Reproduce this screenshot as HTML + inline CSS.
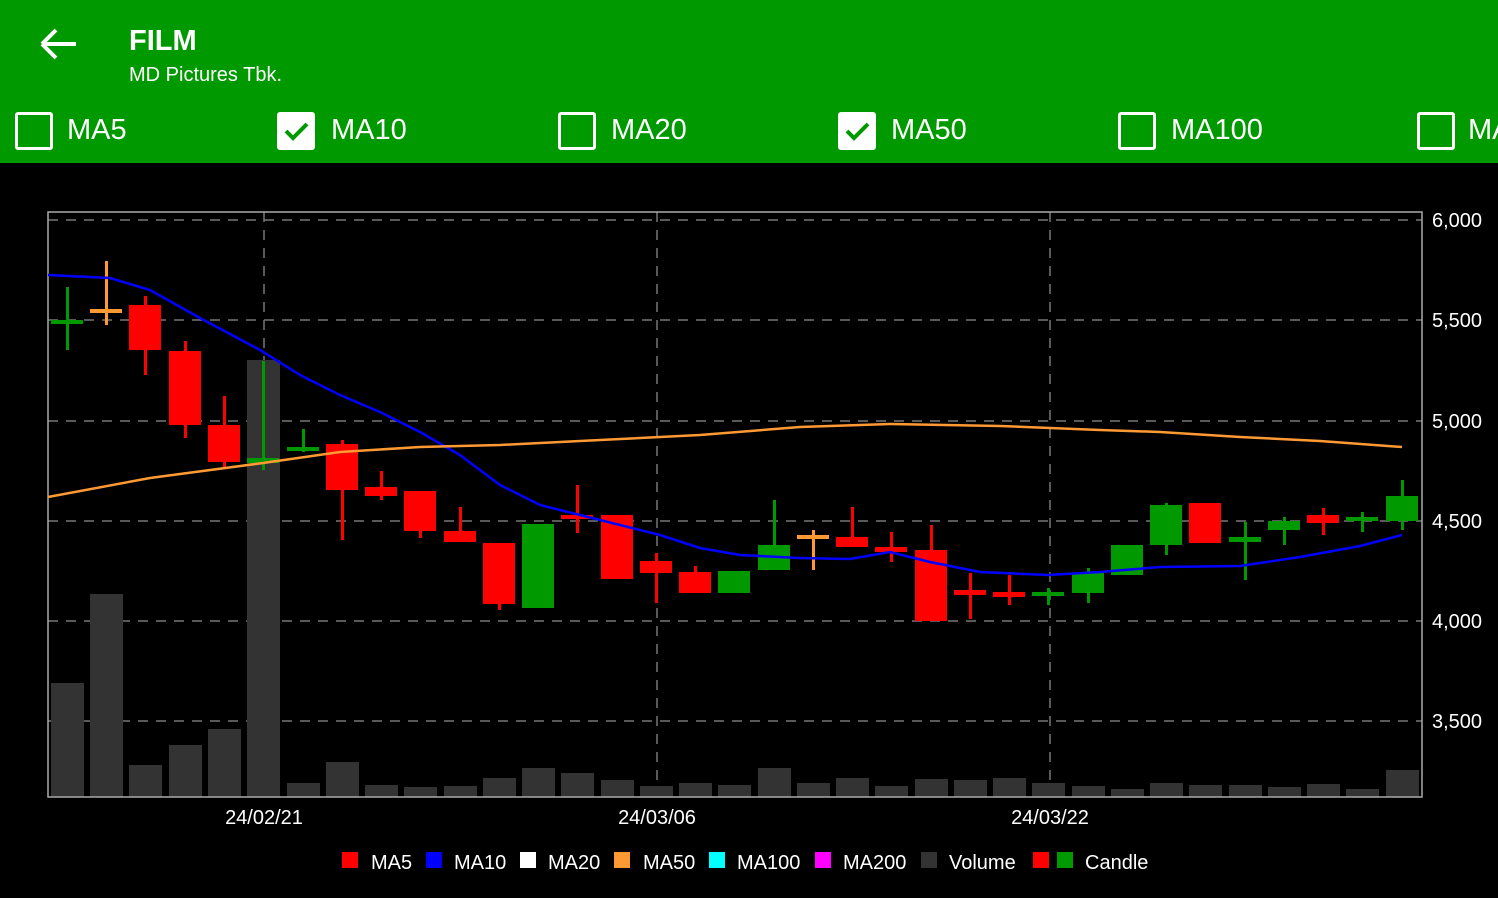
<!DOCTYPE html><html><head><style>
body{margin:0;width:1498px;height:898px;background:#000;overflow:hidden;font-family:"Liberation Sans",Arial,sans-serif;}
.hdr{position:absolute;left:0;top:0;width:1498px;height:163px;background:#009900;color:#fff;}
.cb{position:absolute;top:112px;width:32px;height:32px;border:3px solid #fff;border-radius:3px;box-sizing:content-box;}
.cb.on{background:#fff;}
.lb{position:absolute;top:112px;font-size:29px;line-height:36px;}
</style></head><body>
<div class="hdr">
<svg style="position:absolute;left:38px;top:26px" width="40" height="36" viewBox="0 0 40 36"><path d="M4 18H38M4 18L18 4M4 18L18 32" stroke="#fff" stroke-width="4" fill="none"/></svg>
<div style="position:absolute;left:129px;top:25px;font-size:29px;font-weight:bold">FILM</div>
<div style="position:absolute;left:129px;top:64px;font-size:20px">MD Pictures Tbk.</div>
<div class="cb" style="left:15px"></div><div class="lb" style="left:67px">MA5</div>
<div class="cb on" style="left:277px"><svg width="32" height="32"><path d="M6 16L13 23L27 9" stroke="#009900" stroke-width="4" fill="none"/></svg></div><div class="lb" style="left:331px">MA10</div>
<div class="cb" style="left:558px"></div><div class="lb" style="left:611px">MA20</div>
<div class="cb on" style="left:838px"><svg width="32" height="32"><path d="M6 16L13 23L27 9" stroke="#009900" stroke-width="4" fill="none"/></svg></div><div class="lb" style="left:891px">MA50</div>
<div class="cb" style="left:1118px"></div><div class="lb" style="left:1171px">MA100</div>
<div class="cb" style="left:1417px"></div><div class="lb" style="left:1468px">MA200</div>
</div>
<svg style="position:absolute;left:0;top:0" width="1498" height="898" font-family="Liberation Sans, Arial, sans-serif">
<g stroke="#777" stroke-width="1.5" stroke-dasharray="10,8">
<line x1="48" y1="220" x2="1422" y2="220"/><line x1="48" y1="320" x2="1422" y2="320"/><line x1="48" y1="421" x2="1422" y2="421"/><line x1="48" y1="521" x2="1422" y2="521"/><line x1="48" y1="621" x2="1422" y2="621"/><line x1="48" y1="721" x2="1422" y2="721"/>
<line x1="264" y1="212" x2="264" y2="797"/><line x1="657" y1="212" x2="657" y2="797"/><line x1="1050" y1="212" x2="1050" y2="797"/>
</g>
<g fill="#333">
<rect x="51" y="683" width="33" height="114"/><rect x="90" y="594" width="33" height="203"/><rect x="129" y="765" width="33" height="32"/><rect x="169" y="745" width="33" height="52"/><rect x="208" y="729" width="33" height="68"/><rect x="247" y="360" width="33" height="437"/><rect x="287" y="783" width="33" height="14"/><rect x="326" y="762" width="33" height="35"/><rect x="365" y="785" width="33" height="12"/><rect x="404" y="787" width="33" height="10"/><rect x="444" y="786" width="33" height="11"/><rect x="483" y="778" width="33" height="19"/><rect x="522" y="768" width="33" height="29"/><rect x="561" y="773" width="33" height="24"/><rect x="601" y="780" width="33" height="17"/><rect x="640" y="786" width="33" height="11"/><rect x="679" y="783" width="33" height="14"/><rect x="718" y="785" width="33" height="12"/><rect x="758" y="768" width="33" height="29"/><rect x="797" y="783" width="33" height="14"/><rect x="836" y="778" width="33" height="19"/><rect x="875" y="786" width="33" height="11"/><rect x="915" y="779" width="33" height="18"/><rect x="954" y="780" width="33" height="17"/><rect x="993" y="778" width="33" height="19"/><rect x="1032" y="783" width="33" height="14"/><rect x="1072" y="786" width="33" height="11"/><rect x="1111" y="789" width="33" height="8"/><rect x="1150" y="783" width="33" height="14"/><rect x="1189" y="785" width="33" height="12"/><rect x="1229" y="785" width="33" height="12"/><rect x="1268" y="787" width="33" height="10"/><rect x="1307" y="784" width="33" height="13"/><rect x="1346" y="789" width="33" height="8"/><rect x="1386" y="770" width="33" height="27"/>
</g>
<rect x="48" y="212" width="1374" height="585" fill="none" stroke="#aaa" stroke-width="1.5"/>
<g id="c">
<!-- wicks then bodies -->
<g fill="#009900"><rect x="66" y="287" width="3" height="63"/><rect x="51" y="320" width="32" height="4"/></g>
<g fill="#ff9933"><rect x="105" y="261" width="3" height="64"/><rect x="90" y="309" width="32" height="4"/></g>
<g fill="#ff0000">
<rect x="144" y="296" width="3" height="79"/><rect x="129" y="305" width="32" height="45"/>
<rect x="184" y="341" width="3" height="97"/><rect x="169" y="351" width="32" height="74"/>
<rect x="223" y="396" width="3" height="72"/><rect x="208" y="425" width="32" height="37"/>
<rect x="341" y="440" width="3" height="100"/><rect x="326" y="444" width="32" height="46"/>
<rect x="380" y="471" width="3" height="29"/><rect x="365" y="487" width="32" height="9"/>
<rect x="419" y="491" width="3" height="47"/><rect x="404" y="491" width="32" height="40"/>
<rect x="459" y="507" width="3" height="35"/><rect x="444" y="531" width="32" height="11"/>
<rect x="498" y="543" width="3" height="67"/><rect x="483" y="543" width="32" height="61"/>
<rect x="576" y="485" width="3" height="48"/><rect x="561" y="515" width="32" height="4"/>
<rect x="616" y="515" width="3" height="64"/><rect x="601" y="515" width="32" height="64"/>
<rect x="655" y="553" width="3" height="50"/><rect x="640" y="561" width="32" height="12"/>
<rect x="694" y="566" width="3" height="27"/><rect x="679" y="572" width="32" height="21"/>
<rect x="851" y="507" width="3" height="40"/><rect x="836" y="537" width="32" height="10"/>
<rect x="890" y="532" width="3" height="30"/><rect x="875" y="547" width="32" height="5"/>
<rect x="930" y="525" width="3" height="96"/><rect x="915" y="550" width="32" height="71"/>
<rect x="969" y="573" width="3" height="46"/><rect x="954" y="590" width="32" height="5"/>
<rect x="1008" y="575" width="3" height="30"/><rect x="993" y="592" width="32" height="5"/>
<rect x="1189" y="503" width="32" height="40"/>
<rect x="1322" y="508" width="3" height="27"/><rect x="1307" y="515" width="32" height="8"/>
</g>
<g fill="#009900">
<rect x="262" y="361" width="3" height="109"/><rect x="247" y="458" width="32" height="5"/>
<rect x="302" y="429" width="3" height="23"/><rect x="287" y="447" width="32" height="4"/>
<rect x="522" y="524" width="32" height="84"/>
<rect x="718" y="571" width="32" height="22"/>
<rect x="773" y="500" width="3" height="70"/><rect x="758" y="545" width="32" height="25"/>
<rect x="1047" y="588" width="3" height="17"/><rect x="1032" y="592" width="32" height="4"/>
<rect x="1087" y="568" width="3" height="35"/><rect x="1072" y="573" width="32" height="20"/>
<rect x="1111" y="545" width="32" height="30"/>
<rect x="1165" y="503" width="3" height="52"/><rect x="1150" y="505" width="32" height="40"/>
<rect x="1244" y="522" width="3" height="58"/><rect x="1229" y="537" width="32" height="5"/>
<rect x="1283" y="517" width="3" height="28"/><rect x="1268" y="521" width="32" height="9"/>
<rect x="1361" y="512" width="3" height="20"/><rect x="1346" y="517" width="32" height="4"/>
<rect x="1401" y="480" width="3" height="50"/><rect x="1386" y="496" width="32" height="25"/>
</g>
<g fill="#ff9933"><rect x="812" y="530" width="3" height="40"/><rect x="797" y="535" width="32" height="4"/></g>
</g>
<polyline fill="none" stroke="#0000ff" stroke-width="2.5" points="48,275 110,278 150,290 200,318 260,350 300,375 340,395 380,412 420,432 460,455 500,485 540,505 580,515 620,525 660,535 700,548 740,555 800,558 850,559 890,552 930,562 980,572 1048,575 1100,572 1160,567 1240,566 1300,557 1360,546 1402,535"/>
<polyline fill="none" stroke="#ff9933" stroke-width="2.5" points="48,497 150,478 263,463 340,452 420,447 500,445 600,440 700,435 800,427 890,424 1000,426 1100,430 1160,432 1240,437 1320,441 1402,447"/>
<g fill="#fff" font-size="20">
<text x="1432" y="227">6,000</text><text x="1432" y="327">5,500</text><text x="1432" y="428">5,000</text><text x="1432" y="528">4,500</text><text x="1432" y="628">4,000</text><text x="1432" y="728">3,500</text>
<text x="264" y="824" text-anchor="middle">24/02/21</text><text x="657" y="824" text-anchor="middle">24/03/06</text><text x="1050" y="824" text-anchor="middle">24/03/22</text>
</g>
<g font-size="20" fill="#fff">
<rect x="342" y="852" width="16" height="16" fill="#ff0000"/><text x="371" y="869">MA5</text>
<rect x="426" y="852" width="16" height="16" fill="#0000ff"/><text x="454" y="869">MA10</text>
<rect x="520" y="852" width="16" height="16" fill="#ffffff"/><text x="548" y="869">MA20</text>
<rect x="614" y="852" width="16" height="16" fill="#ff9933"/><text x="643" y="869">MA50</text>
<rect x="709" y="852" width="16" height="16" fill="#00ffff"/><text x="737" y="869">MA100</text>
<rect x="815" y="852" width="16" height="16" fill="#ff00ff"/><text x="843" y="869">MA200</text>
<rect x="921" y="852" width="16" height="16" fill="#333"/><text x="949" y="869">Volume</text>
<rect x="1033" y="852" width="16" height="16" fill="#ff0000"/><rect x="1057" y="852" width="16" height="16" fill="#009900"/><text x="1085" y="869">Candle</text>
</g>
</svg>
</body></html>
